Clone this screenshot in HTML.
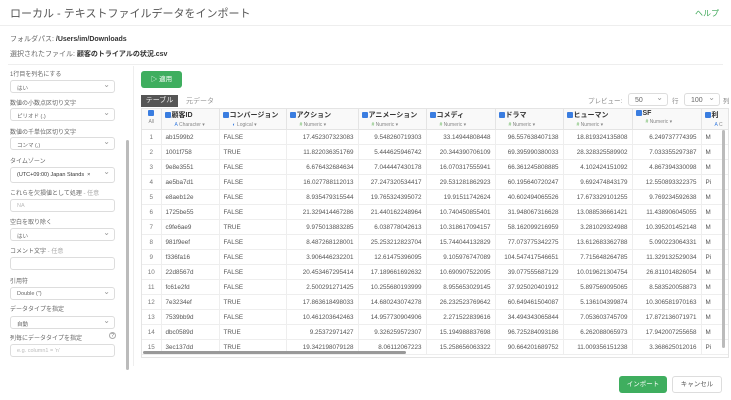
<!DOCTYPE html>
<html><head><meta charset="utf-8"><style>
*{box-sizing:border-box;margin:0;padding:0}
body{width:731px;height:400px;overflow:hidden;background:#fff;font-family:"Liberation Sans","Noto Sans CJK JP",sans-serif;color:#333;position:relative}
.a{position:absolute}
.title{left:10px;top:5px;font-size:11px;color:#555}
.help{right:12px;top:8px;font-size:8px;color:#3aa655}
.hr{left:0;width:731px;height:1px;background:#eee}
.info{left:10px;font-size:7px;color:#666}
.info b{color:#333}
.lbl{left:10px;font-size:6px;color:#666}
.lbl i{font-style:normal;color:#aaa}
.sel{left:10px;width:105px;height:13px;border:1px solid #ddd;border-radius:3px;font-size:5.5px;color:#666;padding:3px 0 0 6px}
.sel:after{content:"⌄";position:absolute;right:4px;top:-1px;font-size:8px;color:#999}
.sel.n:after{content:""}
.btn{background:#3fae5f;color:#fff;border-radius:3px;font-size:6.5px;text-align:center}
table{border-collapse:collapse;table-layout:fixed;font-size:6.3px;color:#555}
td{height:15px;border-bottom:1px solid #eee;border-right:1px solid #eee;white-space:nowrap;overflow:hidden;padding:0 4px}
td.r{text-align:right}
td.c{text-align:center;color:#777}
th{height:20px;background:#f9f9f9;border-right:1px solid #e4e4e4;border-bottom:1px solid #e4e4e4;text-align:left;font-weight:bold;font-size:7px;color:#333;padding:1px 3px;vertical-align:top;white-space:nowrap;overflow:hidden}
th .cb{display:inline-block;width:6px;height:6px;background:#3a7de0;border-radius:1px;margin-right:1px;vertical-align:-1px}
th small{display:block;font-weight:normal;font-size:5px;color:#888;padding-left:10px;margin-top:2px}
th small em{font-style:normal;color:#5ab04f}
th small u{text-decoration:none;color:#3a7de0}
</style></head><body>
<div class="a title">ローカル - テキストファイルデータをインポート</div>
<div class="a help">ヘルプ</div>
<div class="a hr" style="top:25px"></div>
<div class="a info" style="top:34px">フォルダパス: <b>/Users/im/Downloads</b></div>
<div class="a info" style="top:49px">選択されたファイル: <b>顧客のトライアルの状況.csv</b></div>
<div class="a hr" style="top:64px;left:8px;width:715px"></div>

<div class="a lbl" style="top:69px">1行目を列名にする</div>
<div class="a sel" style="top:80px">はい</div>
<div class="a lbl" style="top:98px">数値の小数点区切り文字</div>
<div class="a sel" style="top:108px">ピリオド (.)</div>
<div class="a lbl" style="top:127px">数値の千単位区切り文字</div>
<div class="a sel" style="top:137px">コンマ (,)</div>
<div class="a lbl" style="top:156px">タイムゾーン</div>
<div class="a sel" style="top:167px;height:16px;padding-top:4px;color:#333">(UTC+09:00) Japan Stands &nbsp;×</div>
<div class="a lbl" style="top:188px">これらを欠損値として処理 <i>- 任意</i></div>
<div class="a sel n" style="top:199px;color:#bbb">NA</div>
<div class="a lbl" style="top:217px">空白を取り除く</div>
<div class="a sel" style="top:228px">はい</div>
<div class="a lbl" style="top:246px">コメント文字 <i>- 任意</i></div>
<div class="a sel n" style="top:257px"></div>
<div class="a lbl" style="top:276px">引用符</div>
<div class="a sel" style="top:287px">Double (")</div>
<div class="a lbl" style="top:304px">データタイプを指定</div>
<div class="a sel" style="top:316px">自動</div>
<div class="a lbl" style="top:333px">列毎にデータタイプを指定 <span style="position:absolute;left:99px;top:-1px;width:7px;height:7px;border:1px solid #aaa;border-radius:50%;font-size:5px;text-align:center;line-height:6px">?</span></div>
<div class="a sel n" style="top:344px;color:#bbb">e.g. column1 = 'n'</div>
<div class="a" style="left:126px;top:140px;width:3px;height:230px;background:#bbb;border-radius:2px"></div>
<div class="a" style="left:133px;top:66px;width:1px;height:300px;background:#eee"></div>

<div class="a btn" style="left:141px;top:71px;width:41px;height:17px;line-height:17px">▷ 適用</div>
<div class="a" style="left:141px;top:95px;width:37px;height:12px;background:#555;color:#eee;font-size:7px;text-align:center;line-height:12px">テーブル</div>
<div class="a" style="left:186px;top:96px;font-size:7px;color:#999">元データ</div>
<div class="a" style="left:588px;top:95px;font-size:6.5px;color:#888">プレビュー:</div>
<div class="a sel" style="left:628px;top:93px;width:40px;font-size:7px">50</div>
<div class="a" style="left:672px;top:95px;font-size:6.5px;color:#888">行</div>
<div class="a sel" style="left:684px;top:93px;width:36px;font-size:7px">100</div>
<div class="a" style="left:723px;top:95px;font-size:6.5px;color:#888">列</div>

<div class="a" style="left:141px;top:108px;width:588px;height:250px;overflow:hidden;border:1px solid #e4e4e4">
<table style="width:640px">
<colgroup><col style="width:19px"><col style="width:58px"><col style="width:67px"><col style="width:72px"><col style="width:68px"><col style="width:69px"><col style="width:68px"><col style="width:69px"><col style="width:69px"><col style="width:81px"></colgroup>
<tr><th style="text-align:center"><span class="cb"></span><small style="padding:0">All</small></th>
<th><span class="cb"></span>顧客ID<small><u>A</u> Character ▾</small></th>
<th><span class="cb"></span>コンバージョン<small><u>◐</u> Logical ▾</small></th>
<th><span class="cb"></span>アクション<small><em>#</em> Numeric ▾</small></th>
<th><span class="cb"></span>アニメーション<small><em>#</em> Numeric ▾</small></th>
<th><span class="cb"></span>コメディ<small><em>#</em> Numeric ▾</small></th>
<th><span class="cb"></span>ドラマ<small><em>#</em> Numeric ▾</small></th>
<th><span class="cb"></span>ヒューマン<small><em>#</em> Numeric ▾</small></th>
<th><span class="cb"></span>SF<small><em>#</em> Numeric ▾</small></th>
<th><span class="cb"></span>利<small><u>A</u> C</small></th></tr>
<tr><td class="c">1</td><td>ab1599b2</td><td>FALSE</td><td class="r">17.452307323083</td><td class="r">9.548260719303</td><td class="r">33.14944808448</td><td class="r">96.557638407138</td><td class="r">18.819324135808</td><td class="r">6.249737774395</td><td>M</td></tr>
<tr><td class="c">2</td><td>1001f758</td><td>TRUE</td><td class="r">11.822036351769</td><td class="r">5.444625946742</td><td class="r">20.344390706109</td><td class="r">69.395990380033</td><td class="r">28.328325589902</td><td class="r">7.033355297387</td><td>M</td></tr>
<tr><td class="c">3</td><td>9e8e3551</td><td>FALSE</td><td class="r">6.676432684634</td><td class="r">7.044447430178</td><td class="r">16.070317555941</td><td class="r">66.361245808885</td><td class="r">4.102424151092</td><td class="r">4.867394330098</td><td>M</td></tr>
<tr><td class="c">4</td><td>ae5ba7d1</td><td>FALSE</td><td class="r">16.027788112013</td><td class="r">27.247320534417</td><td class="r">29.531281862923</td><td class="r">60.195640720247</td><td class="r">9.692474843179</td><td class="r">12.550893322375</td><td>Pi</td></tr>
<tr><td class="c">5</td><td>e8aeb12e</td><td>FALSE</td><td class="r">8.935479315544</td><td class="r">19.765324395072</td><td class="r">19.91511742624</td><td class="r">40.602494065526</td><td class="r">17.673329101255</td><td class="r">9.769234592638</td><td>M</td></tr>
<tr><td class="c">6</td><td>1725be55</td><td>FALSE</td><td class="r">21.329414467286</td><td class="r">21.440162248964</td><td class="r">10.740450855401</td><td class="r">31.948067316628</td><td class="r">13.088536661421</td><td class="r">11.438906045055</td><td>M</td></tr>
<tr><td class="c">7</td><td>c9fe6ae9</td><td>TRUE</td><td class="r">9.975013883285</td><td class="r">6.038778042613</td><td class="r">10.318617094157</td><td class="r">58.162099216959</td><td class="r">3.281029324988</td><td class="r">10.395201452148</td><td>M</td></tr>
<tr><td class="c">8</td><td>981f9eef</td><td>FALSE</td><td class="r">8.487268128001</td><td class="r">25.253212823704</td><td class="r">15.744044132829</td><td class="r">77.073775342275</td><td class="r">13.612683362788</td><td class="r">5.090223064331</td><td>M</td></tr>
<tr><td class="c">9</td><td>f336fa16</td><td>FALSE</td><td class="r">3.906446232201</td><td class="r">12.61475396095</td><td class="r">9.105976747089</td><td class="r">104.547417546651</td><td class="r">7.715648264785</td><td class="r">11.329132529034</td><td>Pi</td></tr>
<tr><td class="c">10</td><td>22d8567d</td><td>FALSE</td><td class="r">20.453467295414</td><td class="r">17.189661692632</td><td class="r">10.690907522095</td><td class="r">39.077555687129</td><td class="r">10.019621304754</td><td class="r">26.811014826054</td><td>M</td></tr>
<tr><td class="c">11</td><td>fc61e2fd</td><td>FALSE</td><td class="r">2.500291271425</td><td class="r">10.255680193999</td><td class="r">8.955653029145</td><td class="r">37.925020401912</td><td class="r">5.897569095065</td><td class="r">8.583520058873</td><td>M</td></tr>
<tr><td class="c">12</td><td>7e3234ef</td><td>TRUE</td><td class="r">17.863618498033</td><td class="r">14.680243074278</td><td class="r">26.232523769642</td><td class="r">60.649461504087</td><td class="r">5.136104399874</td><td class="r">10.306581970163</td><td>M</td></tr>
<tr><td class="c">13</td><td>7539bb9d</td><td>FALSE</td><td class="r">10.461203642463</td><td class="r">14.957730904906</td><td class="r">2.271522839616</td><td class="r">34.494343065844</td><td class="r">7.053603745709</td><td class="r">17.872136071971</td><td>M</td></tr>
<tr><td class="c">14</td><td>dbc0589d</td><td>TRUE</td><td class="r">9.25372971427</td><td class="r">9.326259572307</td><td class="r">15.194988837698</td><td class="r">96.725284093186</td><td class="r">6.262088065973</td><td class="r">17.942007255658</td><td>M</td></tr>
<tr><td class="c">15</td><td>3ec137dd</td><td>TRUE</td><td class="r">19.342198079128</td><td class="r">8.06112067223</td><td class="r">15.258656063322</td><td class="r">90.664201689752</td><td class="r">11.009356151238</td><td class="r">3.368625012016</td><td>Pi</td></tr>
</table>
</div>
<div class="a" style="left:143px;top:351px;width:263px;height:3px;background:#999;border-radius:2px"></div>
<div class="a" style="left:722px;top:130px;width:3px;height:218px;background:#bbb;border-radius:2px"></div>

<div class="a btn" style="left:619px;top:376px;width:48px;height:17px;line-height:17px">インポート</div>
<div class="a" style="left:672px;top:376px;width:50px;height:17px;line-height:15px;border:1px solid #ddd;border-radius:3px;font-size:6.5px;text-align:center;color:#555">キャンセル</div>
</body></html>
